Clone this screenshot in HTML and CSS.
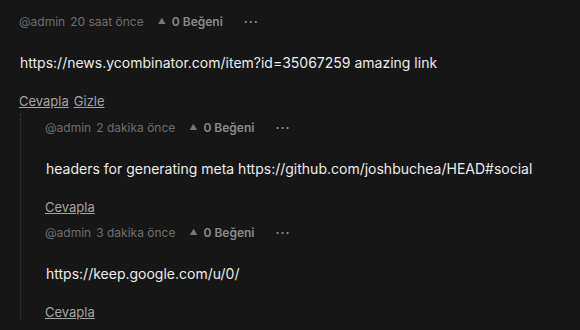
FILE: index.html
```html
<!DOCTYPE html>
<html lang="tr">
<head>
<meta charset="utf-8">
<link rel="stylesheet" href="styles.css">
</head>
<body>
<div class="comment root">
  <div class="meta">
    <span class="user">@admin</span>
    <span class="time">20 saat önce</span>
    <span class="vote"><span class="tri">▲</span><span class="likes">0 Beğeni</span></span>
    <span class="more">···</span>
  </div>
  <p class="text">https://news.ycombinator.com/item?id=35067259 amazing link</p>
  <div class="actions"><a href="#">Cevapla</a><a href="#">Gizle</a></div>
  <div class="children">
    <div class="comment">
      <div class="meta">
        <span class="user">@admin</span>
        <span class="time">2 dakika önce</span>
        <span class="vote"><span class="tri">▲</span><span class="likes">0 Beğeni</span></span>
        <span class="more">···</span>
      </div>
      <p class="text">headers for generating meta https://github.com/joshbuchea/HEAD#social</p>
      <div class="actions"><a href="#">Cevapla</a></div>
    </div>
    <div class="comment">
      <div class="meta">
        <span class="user">@admin</span>
        <span class="time">3 dakika önce</span>
        <span class="vote"><span class="tri">▲</span><span class="likes">0 Beğeni</span></span>
        <span class="more">···</span>
      </div>
      <p class="text">https://keep.google.com/u/0/</p>
      <div class="actions"><a href="#">Cevapla</a></div>
    </div>
  </div>
</div>
</body>
</html>
```
FILE: styles.css
```css
html, body {
  margin: 0;
  background: #161616;
}
body {
  font-family: Inter, "Noto Sans", sans-serif;
  color: #e8e8e8;
  height: 330px;
  overflow: hidden;
}
.root {
  padding: 11px 0 0 19px;
}
.meta {
  display: flex;
  align-items: center;
  height: 20px;
  font-size: 12px;
  color: #6e6e6e;
}
.time {
  margin-left: 5px;
}
.vote {
  display: flex;
  align-items: center;
  margin-left: 14px;
}
.tri {
  font-size: 8px;
  color: #777;
  margin-right: 6px;
}
.likes {
  font-weight: 600;
  color: #8a8a8a;
}
.more {
  margin-left: 21px;
  font-weight: 700;
  color: #8a8a8a;
  letter-spacing: 1px;
}
.text {
  margin: 22px 0 0 1px;
  font-size: 14px;
  line-height: 20px;
  color: #ececec;
}
.actions {
  display: flex;
  gap: 5px;
  margin-top: 20px;
  font-size: 13px;
  line-height: 16px;
}
.actions a {
  color: #a3a3a3;
}
.children {
  margin: 5px 0 0 1px;
  border-left: 1px dotted #3c3c3c;
  padding: 3px 0 0 24px;
}
.children .comment + .comment {
  margin-top: 7px;
}
```
